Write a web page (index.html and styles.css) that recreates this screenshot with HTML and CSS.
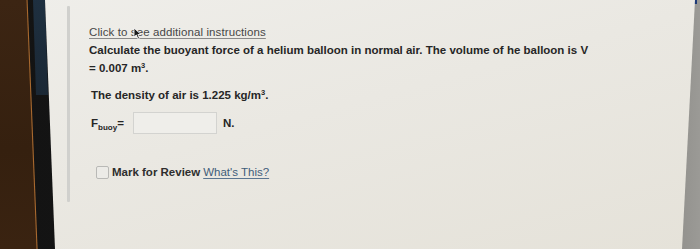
FILE: index.html
```html
<!DOCTYPE html>
<html>
<head>
<meta charset="utf-8">
<link rel="stylesheet" href="styles.css">
</head>
<body>
<div class="stage">
  <div class="wood"></div>
  <div class="woodline"></div>
  <div class="glare"></div>
  <div class="screen">
    <div class="rail"></div>
    <div class="content">
      <a class="link">Click to see additional instructions</a>
      <p class="q">Calculate the buoyant force of a helium balloon in normal air. The volume of he balloon is V<br>= 0.007 m<sup>3</sup>.</p>
      <p class="d">The density of air is 1.225 kg/m<sup>3</sup>.</p>
      <div class="answer"><span class="f">F<sub>buoy</sub>=</span><span class="box"></span><span class="unit">N.</span></div>
      <div class="review"><span class="cb"></span><b>Mark for Review</b><a class="what">What's This?</a></div>
    </div>
    <svg class="cursor" width="9" height="13" viewBox="0 0 9 13"><path d="M1 1 L1 10 L3.3 8 L5 12 L6.5 11.3 L4.9 7.5 L8 7.5 Z" fill="#1a1a1a" stroke="#f4f4f4" stroke-width="0.9"/></svg>
  </div>
  <div class="topbtn"></div>
</div>
</body>
</html>
```
FILE: styles.css
```css
html, body {
  margin: 0;
  padding: 0;
}
body {
  width: 700px;
  height: 249px;
  overflow: hidden;
  font-family: "Liberation Sans", Arial, sans-serif;
}
.stage {
  display: grid;
  width: 700px;
  height: 249px;
  background: linear-gradient(90deg, #131313 0, #161616 50%, #4e4e4c 50%, #8f8e8a 96%, #9b9a96 100%);
}
.stage > * {
  grid-area: 1 / 1;
}
.wood {
  background: linear-gradient(180deg, #3c2513, #35200f 60%, #3a2311);
  clip-path: polygon(0 0, 27px 0, 37px 100%, 0 100%);
}
.woodline {
  background: #a8692f;
  clip-path: polygon(26.5px 0, 27.6px 0, 37.6px 100%, 36.5px 100%);
}
.glare {
  background: linear-gradient(180deg, #22394f, #1b2a39 55%, rgba(22,22,22,0) 80%);
  clip-path: polygon(33px 0, 45px 0, 48px 95px, 36px 95px);
  opacity: 0.75;
}
.screen {
  position: relative;
  display: flex;
  align-items: flex-start;
  padding: 6px 0 0 67px;
  background: linear-gradient(165deg, #efeeea 0%, #eae8e2 45%, #e5e2d9 100%);
  clip-path: polygon(45px 0, 695px 0, 682px 100%, 55px 100%);
  color: #262626;
}
.rail {
  flex: none;
  width: 3px;
  height: 196px;
  background: #d0d0cd;
  border-radius: 1px;
}
.content {
  margin-left: 19px;
  padding-top: 18px;
  font-size: 11.5px;
}
.link {
  display: block;
  line-height: 17px;
  color: #474747;
  text-decoration: underline;
  text-decoration-color: #8a8a8a;
  text-underline-offset: 2px;
  width: max-content;
  letter-spacing: 0.1px;
}
.q {
  margin: 0;
  font-weight: bold;
  line-height: 18px;
}
.d {
  margin: 9px 0 0 2px;
  font-weight: bold;
  line-height: 18px;
}
sup {
  font-size: 7.5px;
  vertical-align: 4px;
  line-height: 0;
}
.answer {
  display: flex;
  align-items: center;
  margin-top: 8px;
  margin-left: 2px;
  height: 22px;
  font-weight: bold;
}
.f {
  width: 42px;
}
sub {
  font-size: 8px;
  vertical-align: -3px;
  line-height: 0;
}
.box {
  width: 82px;
  height: 20px;
  border: 1px solid #d3d3d0;
  background: #efeeea;
}
.unit {
  margin-left: 6px;
}
.review {
  display: flex;
  align-items: center;
  margin-top: 31px;
  margin-left: 7px;
  height: 14px;
}
.cb {
  width: 11px;
  height: 11px;
  border: 1px solid #b9b9b6;
  border-radius: 2px;
  background: #ecebe7;
  margin-right: 3px;
}
.review b {
  color: #2e2e2e;
}
.what {
  margin-left: 3px;
  color: #3f5d7a;
  text-decoration: underline;
  text-decoration-color: #5a7590;
  text-underline-offset: 2px;
}
.cursor {
  position: absolute;
  left: 133px;
  top: 27px;
}
.topbtn {
  justify-self: end;
  align-self: start;
  width: 30px;
  height: 4px;
  margin-right: 3px;
  background: #1d3a78;
  border-radius: 0 0 0 4px;
}
```
